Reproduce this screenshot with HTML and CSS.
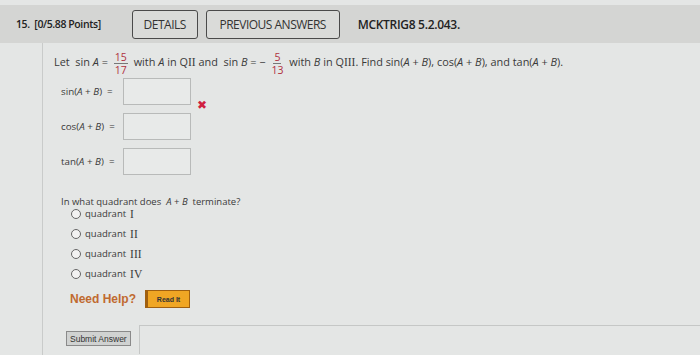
FILE: index.html
```html
<!DOCTYPE html>
<html>
<head>
<meta charset="utf-8">
<link rel="stylesheet" href="styles.css">
</head>
<body>
<div class="page">
  <div class="header">
    <span class="title">15. &nbsp;[0/5.88 Points]</span>
    <span class="btn btn-details">DETAILS</span>
    <span class="btn btn-prev">PREVIOUS ANSWERS</span>
    <span class="code">MCKTRIG8 5.2.043.</span>
  </div>
  <div class="panel">
    <div class="question">Let &nbsp;sin <i>A</i> = <span class="frac"><span class="num">15</span><span class="den">17</span></span> with <i>A</i> in Q<span class="rn">II</span> and &nbsp;sin <i>B</i> = &minus; <span class="frac"><span class="num">5</span><span class="den">13</span></span> with <i>B</i> in Q<span class="rn">III</span>. Find sin(<i>A</i> + <i>B</i>), cos(<i>A</i> + <i>B</i>), and tan(<i>A</i> + <i>B</i>).</div>
    <div class="answers">
      <div class="arow">
        <span class="lbl">sin(<i>A</i> + <i>B</i>) &nbsp;=</span>
        <span class="box"></span>
        <span class="wrong">&#10006;</span>
      </div>
      <div class="arow">
        <span class="lbl">cos(<i>A</i> + <i>B</i>) &nbsp;=</span>
        <span class="box"></span>
      </div>
      <div class="arow">
        <span class="lbl">tan(<i>A</i> + <i>B</i>) &nbsp;=</span>
        <span class="box"></span>
      </div>
    </div>
    <div class="quad">
      <div class="qtext">In what quadrant does &nbsp;<i>A</i> + <i>B</i> &nbsp;terminate?</div>
      <div class="opts">
        <label class="opt"><span class="radio"></span>quadrant <span class="rn">I</span></label>
        <label class="opt"><span class="radio"></span>quadrant <span class="rn">II</span></label>
        <label class="opt"><span class="radio"></span>quadrant <span class="rn">III</span></label>
        <label class="opt"><span class="radio"></span>quadrant <span class="rn">IV</span></label>
      </div>
    </div>
    <div class="help">
      <span class="need">Need Help?</span>
      <span class="readit">Read It</span>
    </div>
    <div class="submit-row">
      <span class="submit">Submit Answer</span>
      <div class="tabline"></div>
    </div>
  </div>
</div>
</body>
</html>
```
FILE: styles.css
```css
html, body {
  margin: 0;
  padding: 0;
}
body {
  background: #e4e6e5;
  font-family: "Open Sans", "DejaVu Sans", sans-serif;
  color: #3a3a3a;
  width: 700px;
  height: 355px;
  overflow: hidden;
}
.page {
  padding-top: 5px;
}
.header {
  height: 38px;
  background: #d4d5d3;
  display: flex;
  align-items: center;
  padding-left: 16px;
  box-sizing: border-box;
}
.title {
  font-weight: 600;
  font-size: 10.5px;
  letter-spacing: -0.4px;
  color: #222;
  margin-right: 31px;
}
.btn {
  display: flex;
  align-items: center;
  justify-content: center;
  height: 29px;
  box-sizing: border-box;
  border: 1.5px solid #4a4a4a;
  border-radius: 3px;
  font-size: 12px;
  letter-spacing: -0.5px;
  color: #333;
  background: #dadbd9;
}
.btn-details {
  width: 66px;
}
.btn-prev {
  width: 134px;
  margin-left: 8px;
}
.code {
  margin-left: 18px;
  font-weight: 600;
  font-size: 12px;
  letter-spacing: -0.3px;
  color: #222;
}
.panel {
  margin-left: 42px;
  border-left: 1px solid #c9cbca;
  padding-left: 11px;
  height: 312px;
  display: flex;
  flex-direction: column;
}
.question {
  font-size: 10.9px;
  margin-top: 6px;
  line-height: 26px;
  height: 26px;
  white-space: nowrap;
  color: #3a3a3a;
}
.rn {
  font-family: "Liberation Serif", "Times New Roman", serif;
  font-size: 11.5px;
}
.frac {
  display: inline-flex;
  flex-direction: column;
  align-items: center;
  vertical-align: middle;
  color: #b03040;
  font-size: 10.5px;
  line-height: 12px;
  margin: 0 3px;
}
.frac .num {
  border-bottom: 1px solid #777;
  padding: 0 1px;
}
.answers {
  display: flex;
  flex-direction: column;
  gap: 8px;
  margin-top: 3px;
  margin-left: 7px;
}
.arow {
  display: flex;
  align-items: center;
  font-size: 9.8px;
}
.lbl {
  width: 62px;
}
.box {
  width: 68px;
  height: 27px;
  border: 1px solid #b8bab9;
  background: #e8eae9;
  box-sizing: border-box;
  display: block;
}
.wrong {
  color: #d02040;
  font-size: 12px;
  line-height: 14px;
  margin-left: 6px;
  align-self: flex-end;
  margin-bottom: -7px;
}
.quad {
  margin-top: 20px;
  margin-left: 7px;
  font-size: 9.5px;
}
.qtext {
  line-height: 13px;
}
.opts {
  display: flex;
  flex-direction: column;
  gap: 7px;
  margin-left: 10px;
  margin-top: -1px;
}
.opt {
  display: flex;
  align-items: center;
  gap: 4px;
  height: 13px;
}
.radio {
  width: 8px;
  height: 8px;
  border: 1px solid #666;
  border-radius: 50%;
  background: #f2f2f2;
}
.help {
  display: flex;
  align-items: center;
  margin-top: 10px;
  margin-left: 16px;
}
.need {
  font-family: "Liberation Sans", Arial, sans-serif;
  font-weight: bold;
  font-size: 12px;
  color: #c06a30;
}
.readit {
  margin-left: 9px;
  width: 45px;
  height: 18px;
  box-sizing: border-box;
  border: 1px solid #a06010;
  border-left-width: 3px;
  background: #f0a624;
  font-family: "Liberation Sans", Arial, sans-serif;
  font-weight: bold;
  font-size: 7px;
  color: #333;
  display: flex;
  align-items: center;
  justify-content: center;
}
.submit-row {
  display: flex;
  align-items: flex-end;
  margin-top: 17px;
  margin-left: 12px;
}
.submit {
  font-family: "Liberation Sans", Arial, sans-serif;
  font-size: 8.5px;
  color: #333;
  background: #d0d2d1;
  border: 1px solid #8a8a8a;
  padding: 1px 3px;
  height: 15px;
  box-sizing: border-box;
  display: flex;
  align-items: center;
  margin-bottom: 8px;
}
.tabline {
  flex: 1;
  height: 28px;
  margin-left: 8px;
  border-top: 1px solid #c5c7c6;
  border-left: 1px solid #c5c7c6;
}
```
